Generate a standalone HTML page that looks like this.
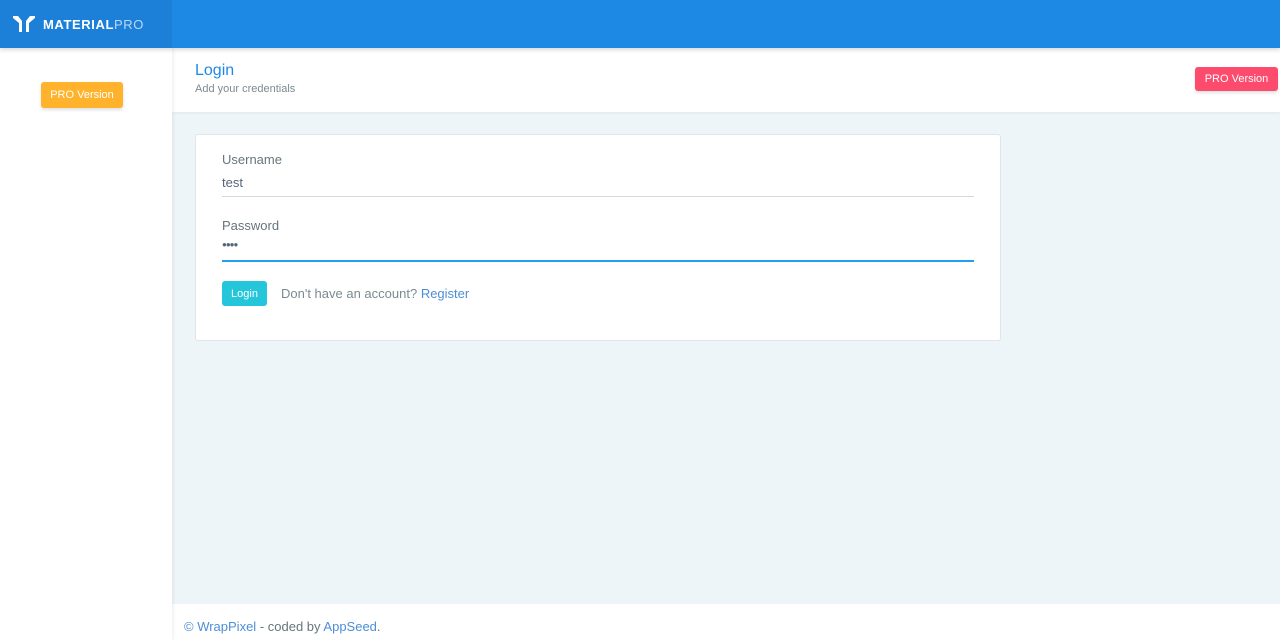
<!DOCTYPE html>
<html><head><meta charset="utf-8">
<style>
*{box-sizing:border-box;margin:0;padding:0}
body{width:1280px;height:640px;overflow:hidden;background:#eef5f9;font-family:"Liberation Sans",sans-serif;color:#67757c;position:relative}
.top{position:absolute;left:0;top:0;width:1280px;height:48px;background:#1e88e5;box-shadow:0 2px 4px rgba(0,0,0,.15);z-index:3}
.logo{position:absolute;left:0;top:0;width:172px;height:48px;background:#1c80d8;display:flex;align-items:center;padding-left:13px}
.logo span{color:#fff;font-weight:bold;font-size:13px;letter-spacing:.6px;margin-left:8px}
.logo span i{font-style:normal;font-weight:normal;color:#b9d8f5}
.side{position:absolute;left:0;top:48px;width:172px;height:592px;background:#fff;box-shadow:1px 0 4px rgba(0,0,0,.08);z-index:2}
.btn{position:absolute;font-size:11px;color:#fff;border-radius:3px;display:flex;align-items:center;justify-content:center;box-shadow:0 2px 3px rgba(0,0,0,.12)}
.tb{position:absolute;left:172px;top:48px;width:1108px;height:64px;background:#fff;box-shadow:0 1px 3px rgba(0,0,0,.06)}
.tb h3{position:absolute;left:23px;top:14px;font-size:16px;font-weight:normal;color:#1e88e5}
.tb p{position:absolute;left:23px;top:35px;font-size:11px;color:#7b8a91}
.card{position:absolute;left:195px;top:134px;width:806px;height:207px;background:#fff;border:1px solid #dfe5e9;border-radius:3px}
.lbl{position:absolute;left:26px;font-size:13px;color:#67757c}
.val{position:absolute;left:26px;font-size:13px;color:#54667a}
.line{position:absolute;left:26px;width:752px}
.foot{position:absolute;left:172px;top:604px;width:1108px;height:36px;background:#fff;font-size:13px;padding:15px 0 0 12px;color:#67757c}
a{color:#4e8ed6;text-decoration:none}
</style></head><body>
<div class="top"><div class="logo">
<svg width="22" height="20" viewBox="0 0 22 20"><path d="M0 2h5l4 5v11h-3V9L0 4z M22 2h-5l-4 5v11h3V9l6-5z" fill="#fff"/></svg>
<span>MATERIAL<i>PRO</i></span></div></div>
<div class="side"><div class="btn" style="left:41px;top:34px;width:82px;height:26px;background:#ffb22b">PRO Version</div></div>
<div class="tb"><h3>Login</h3><p>Add your credentials</p>
<div class="btn" style="left:1023px;top:19px;width:83px;height:24px;background:#fc4b6c">PRO Version</div></div>
<div class="card">
<div class="lbl" style="top:17px">Username</div>
<div class="val" style="top:40px">test</div>
<div class="line" style="top:61px;height:1px;background:#d6d9dc"></div>
<div class="lbl" style="top:83px">Password</div>
<div class="val" style="top:105px;font-size:8px;letter-spacing:-1px">●●●●</div>
<div class="line" style="top:125px;height:2px;background:#1e9ff2"></div>
<div class="btn" style="left:26px;top:146px;width:45px;height:25px;background:#26c6da;font-size:11px;box-shadow:none">Login</div>
<div style="position:absolute;left:85px;top:151px;font-size:13px;color:#7b8a91">Don't have an account? <a>Register</a></div>
</div>
<div class="foot"><a>© WrapPixel</a> - coded by <a>AppSeed</a>.</div>
</body></html>
